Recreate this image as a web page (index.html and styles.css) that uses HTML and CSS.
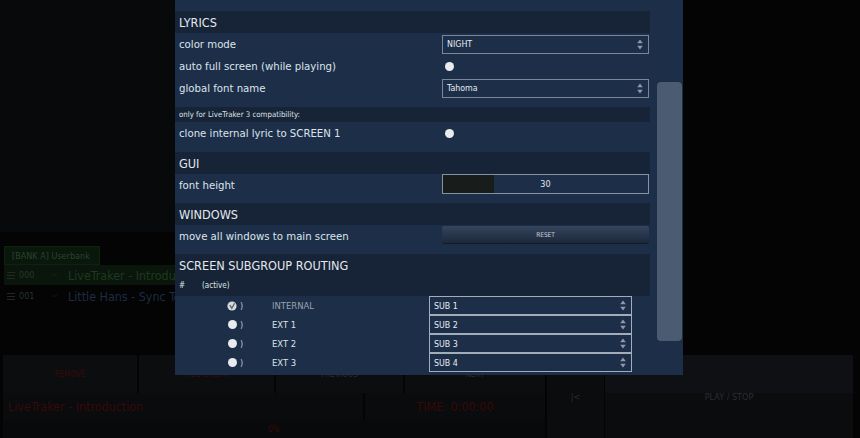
FILE: index.html
```html
<!DOCTYPE html>
<html>
<head>
<meta charset="utf-8">
<link rel="stylesheet" href="styles.css">
</head>
<body>
<div class="app">
  <div class="upper">
    <div class="stage"></div>
    <div class="playlist">
      <div class="bank-tab">[BANK A] Userbank</div>
      <div class="song active">
        <svg class="handle" width="8" height="7" viewBox="0 0 8 7"><path d="M0 0.5H8M0 3.5H8M0 6.5H8" stroke="currentColor" stroke-width="1"/></svg>
        <span class="song-num">000</span>
        <span class="song-badge">⇨</span>
        <span class="song-title">LiveTraker - Introduction</span>
      </div>
      <div class="song">
        <svg class="handle" width="8" height="7" viewBox="0 0 8 7"><path d="M0 0.5H8M0 3.5H8M0 6.5H8" stroke="currentColor" stroke-width="1"/></svg>
        <span class="song-num">001</span>
        <span class="song-badge">⇨</span>
        <span class="song-title">Little Hans - Sync Test</span>
      </div>
    </div>
  </div>
  <div class="controls">
    <div class="ctl-left">
      <div class="btn-row">
        <div class="btn red">REMOVE</div>
        <div class="btn red">ADD BREAK</div>
        <div class="btn">PREVIOUS</div>
        <div class="btn">NEXT</div>
      </div>
      <div class="now-row">
        <div class="now-title">LiveTraker - Introduction</div>
        <div class="now-time">TIME: 0:00:00</div>
      </div>
      <div class="progress-row">0%</div>
    </div>
    <div class="ctl-right">
      <div class="prev-btn">|&lt;</div>
      <div class="play-btn">PLAY / STOP</div>
    </div>
  </div>
</div>

<div class="modal">
  <div class="settings">
    <section class="group lyrics">
      <div class="group-head">LYRICS</div>
      <div class="row">
        <span class="label">color mode</span>
        <div class="select"><span>NIGHT</span><svg class="arrows" width="6" height="11" viewBox="0 0 6 11"><path d="M3 0.5L5.8 4.3H0.2Z M3 10.5L5.8 6.7H0.2Z" fill="#8f99a7"/></svg></div>
      </div>
      <div class="row">
        <span class="label">auto full screen (while playing)</span>
        <span class="radio"></span>
      </div>
      <div class="row">
        <span class="label">global font name</span>
        <div class="select"><span>Tahoma</span><svg class="arrows" width="6" height="11" viewBox="0 0 6 11"><path d="M3 0.5L5.8 4.3H0.2Z M3 10.5L5.8 6.7H0.2Z" fill="#8f99a7"/></svg></div>
      </div>
      <div class="subhead">only for LiveTraker 3 compatibility:</div>
      <div class="row">
        <span class="label">clone internal lyric to SCREEN 1</span>
        <span class="radio"></span>
      </div>
    </section>

    <section class="group">
      <div class="group-head">GUI</div>
      <div class="row">
        <span class="label">font height</span>
        <div class="slider" style="--fill: 25%">30</div>
      </div>
    </section>

    <section class="group">
      <div class="group-head">WINDOWS</div>
      <div class="row">
        <span class="label">move all windows to main screen</span>
        <div class="reset">RESET</div>
      </div>
    </section>

    <section class="group routing">
      <div class="group-head tall">
        <span class="head-title">SCREEN SUBGROUP ROUTING</span>
        <div class="colheads"><span>#</span><span class="col-active">(active)</span></div>
      </div>
      <div class="route">
        <div class="route-radio">
          <svg class="check" width="10" height="10" viewBox="0 0 10 10"><circle cx="5" cy="5" r="4.6" fill="#d6d9de"/><path d="M2.8 4.2L4.8 7.2L7.6 2.2" fill="none" stroke="#5d636c" stroke-width="1.3"/></svg>
          <span class="paren">)</span>
        </div>
        <span class="route-label dim">INTERNAL</span>
        <div class="select narrow"><span>SUB 1</span><svg class="arrows" width="6" height="11" viewBox="0 0 6 11"><path d="M3 0.5L5.8 4.3H0.2Z M3 10.5L5.8 6.7H0.2Z" fill="#8f99a7"/></svg></div>
      </div>
      <div class="route">
        <div class="route-radio"><span class="radio"></span><span class="paren">)</span></div>
        <span class="route-label">EXT 1</span>
        <div class="select narrow"><span>SUB 2</span><svg class="arrows" width="6" height="11" viewBox="0 0 6 11"><path d="M3 0.5L5.8 4.3H0.2Z M3 10.5L5.8 6.7H0.2Z" fill="#8f99a7"/></svg></div>
      </div>
      <div class="route">
        <div class="route-radio"><span class="radio"></span><span class="paren">)</span></div>
        <span class="route-label">EXT 2</span>
        <div class="select narrow"><span>SUB 3</span><svg class="arrows" width="6" height="11" viewBox="0 0 6 11"><path d="M3 0.5L5.8 4.3H0.2Z M3 10.5L5.8 6.7H0.2Z" fill="#8f99a7"/></svg></div>
      </div>
      <div class="route">
        <div class="route-radio"><span class="radio"></span><span class="paren">)</span></div>
        <span class="route-label">EXT 3</span>
        <div class="select narrow"><span>SUB 4</span><svg class="arrows" width="6" height="11" viewBox="0 0 6 11"><path d="M3 0.5L5.8 4.3H0.2Z M3 10.5L5.8 6.7H0.2Z" fill="#8f99a7"/></svg></div>
      </div>
    </section>
  </div>
  <div class="scroll"><div class="thumb"></div></div>
</div>
</body>
</html>
```

FILE: styles.css
```css
* { box-sizing: border-box; }
html, body { margin: 0; padding: 0; }
body {
  width: 860px;
  height: 438px;
  overflow: hidden;
  position: relative;
  background: #040404;
  font-family: "DejaVu Sans Condensed", "DejaVu Sans", sans-serif;
}

/* ---------- background application (dimmed) ---------- */
.app { display: flex; flex-direction: column; height: 438px; }
.upper { height: 355px; }
.stage { width: 545px; height: 232px; background: #08090b; }
.playlist { width: 545px; padding: 14px 0 0 4px; }
.bank-tab {
  width: 96px; height: 19px;
  background: #0a170b;
  border: 1px solid #0d220f;
  color: #294430;
  font-size: 9px;
  display: flex; align-items: center;
  padding-left: 7px;
}
.song {
  height: 20px;
  display: flex; align-items: center;
  padding-left: 3px;
  margin-bottom: 1px;
  color: #222c27;
  white-space: nowrap;
}
.song.active { background: #0a160b; }
.handle { color: #1f2922; flex: none; }
.song-num { font-size: 9px; color: #28332c; margin-left: 4px; width: 16px; flex: none; }
.song-badge { font-size: 7px; color: #1c2420; margin-left: 17px; width: 8px; flex: none; }
.song-title { font-size: 12.4px; margin-left: 8px; color: #1d3921; }
.song:not(.active) .song-title { color: #1d2b43; }

.controls { height: 83px; display: flex; gap: 2px; padding-left: 3px; }
.ctl-left { width: 542px; display: flex; flex-direction: column; }
.btn-row {
  height: 38px;
  display: grid;
  grid-template-columns: 134px 135px 127px 140px;
  gap: 2px;
}
.btn {
  background: #0c0d0f;
  display: flex; align-items: center; justify-content: center;
  font-size: 8px;
  color: #2a2c30;
  padding-top: 1px;
}
.btn.red { color: #380b0b; }
.now-row { height: 27px; display: flex; gap: 2px; }
.now-title {
  width: 360px;
  background: #0a0b0d;
  color: #380909;
  font-size: 12.4px;
  display: flex; align-items: center;
  padding-left: 5px;
}
.now-time {
  flex: 1;
  background: #0a0b0d;
  color: #380909;
  font-size: 12.4px;
  display: flex; align-items: center; justify-content: center;
}
.progress-row {
  height: 18px;
  background: #08090b;
  color: #380a0a;
  font-size: 8px;
  display: flex; align-items: center; justify-content: center;
}
.ctl-right { display: flex; gap: 1px; }
.prev-btn, .play-btn {
  display: flex; align-items: center; justify-content: center;
  color: #2b2d31;
  font-size: 9px;
}
.prev-btn { width: 57px; background: #0b0c0e; }
.play-btn {
  width: 248px;
  background: linear-gradient(#0f1013 0, #0f1013 38px, #0b0c0e 38px);
}

/* ---------- settings dialog ---------- */
.modal {
  position: absolute;
  left: 175px; top: 0;
  width: 508px; height: 375px;
  background: #1c2e48;
  display: flex;
}
.settings { width: 475px; padding-top: 11px; }
.scroll { flex: 1; padding: 82px 1px 0 7px; }
.thumb { height: 259px; background: #4b5b71; border-radius: 4px; }

.group { margin-bottom: 7px; }
.group.lyrics { margin-bottom: 8px; }
.group-head {
  height: 22px;
  background: #172336;
  color: #e3e8ee;
  font-size: 12.6px;
  display: flex; align-items: center;
  padding-left: 4px;
}
.group-head.tall {
  height: 42px;
  flex-direction: column;
  align-items: flex-start;
}
.head-title { height: 22px; display: flex; align-items: center; }
.colheads {
  height: 20px;
  display: flex; align-items: center;
  font-size: 8px;
  line-height: 1;
  color: #dfe4ea;
}
.col-active { margin-left: 17px; }

.row {
  height: 22px;
  display: flex; align-items: center;
  padding-left: 4px;
}
.label { width: 263px; font-size: 11.3px; color: #dde3ea; }
.subhead {
  height: 15px;
  margin-top: 8px;
  background: #172336;
  color: #dde3ea;
  font-size: 7.8px;
  display: flex; align-items: center;
  padding-left: 4px;
}
.select {
  width: 207px; height: 19px;
  border: 1px solid #7b8799;
  display: flex; align-items: center; justify-content: space-between;
  padding: 0 5px 0 4px;
  font-size: 8.8px;
  color: #e8ecf0;
}
.select.narrow { width: 203px; border-color: #a3acb9; }
.radio {
  width: 9px; height: 9px;
  border-radius: 50%;
  background: #e9ebee;
  margin-left: 3px;
  flex: none;
}
.slider {
  width: 207px; height: 20px;
  border: 1px solid #8592a4;
  background: linear-gradient(to right, #181d1c var(--fill), transparent var(--fill));
  display: flex; align-items: center; justify-content: center;
  font-size: 9px;
  color: #e2e6ec;
  margin-top: -2px;
}
.reset {
  width: 207px; height: 17px;
  margin-top: -3px;
  background: linear-gradient(#35445c, #27354b 55%, #1c2739);
  border-radius: 2px;
  box-shadow: 0 1px 0 #131b28;
  display: flex; align-items: center; justify-content: center;
  font-size: 6.5px;
  color: #c8cdd5;
}

.route { height: 19px; display: flex; align-items: center; }
.route-radio {
  width: 97px;
  padding-left: 53px;
  display: flex; align-items: center;
}
.route-radio .radio { margin-left: 0; }
.check { flex: none; margin-left: -1px; }
.paren { font-size: 9px; color: #c3c9d1; margin-left: 3px; }
.route-label { width: 157px; font-size: 9.4px; color: #dce1e7; }
.route-label.dim { color: #9aa2ad; }
```
